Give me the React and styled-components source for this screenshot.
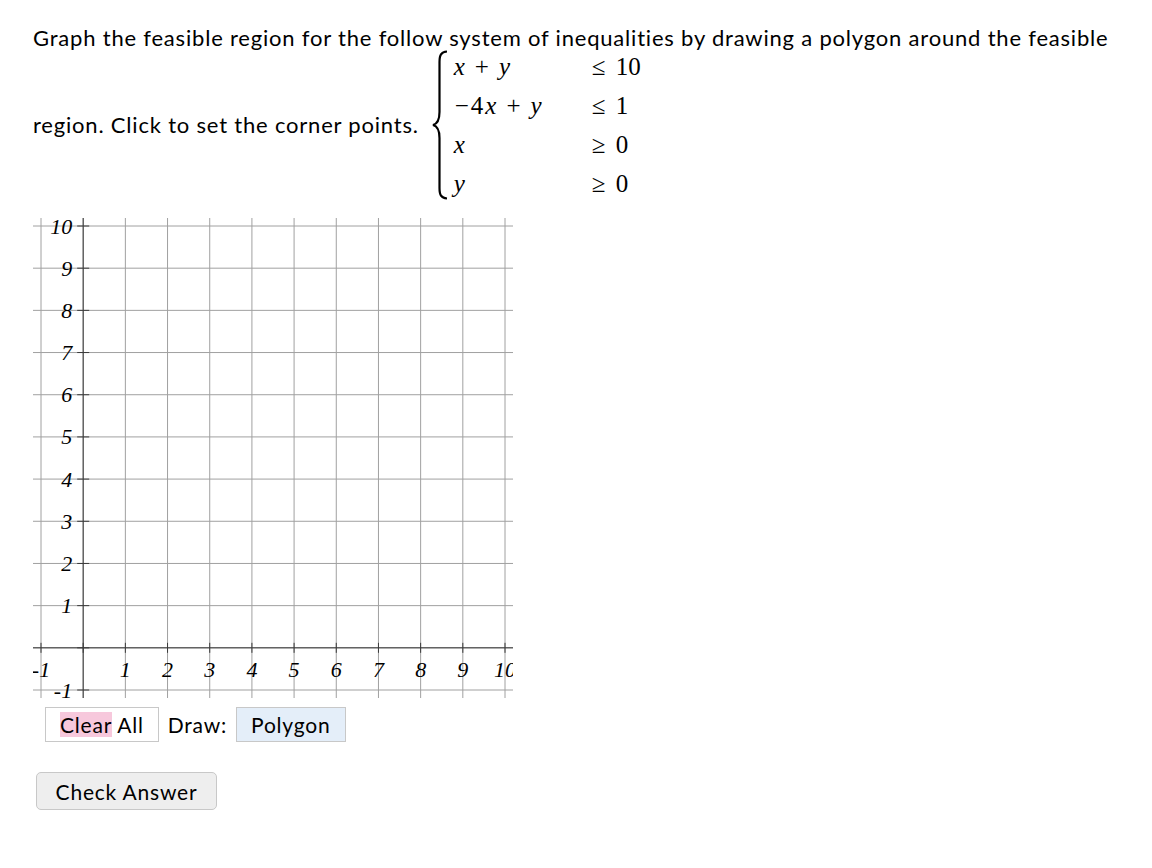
import React from 'react'
import styled, { createGlobalStyle } from 'styled-components'

const GlobalStyle = createGlobalStyle`
  body {
    margin: 0;
    background: #fff;
    color: #000;
    font-family: Lato, "Liberation Sans", sans-serif;
  }
`

const SIZE = 480
const PAD = 8
const UNIT = (SIZE - 2 * PAD) / 11
const px = (u) => PAD + (u + 1) * UNIT
const py = (u) => SIZE - PAD - (u + 1) * UNIT
const steps = Array.from({ length: 12 }, (_, i) => i - 1)

const rows = [
  { lhs: [['v', 'x'], ['op', '+'], ['v', 'y']], rel: '≤', rhs: '10' },
  { lhs: [['neg', '−'], ['n', '4'], ['v', 'x'], ['op', '+'], ['v', 'y']], rel: '≤', rhs: '1' },
  { lhs: [['v', 'x']], rel: '≥', rhs: '0' },
  { lhs: [['v', 'y']], rel: '≥', rhs: '0' },
]

const App = () => {
  return (
    <Page>
      <GlobalStyle />
      <Prompt>
        <div>Graph the feasible region for the follow system of inequalities by drawing a polygon around the feasible</div>
        <SecondLine>
          <span>region. Click to set the corner points.</span>
          <Cases>
            <Brace viewBox='0 0 16 150' width='16' height='150'>
              <path d='M15 1.5 C9 2 7.5 5 7.5 12 L7.5 62 C7.5 70 5 74 1 75 C5 76 7.5 80 7.5 88 L7.5 138 C7.5 145 9 148 15 148.5' fill='none' stroke='#000' strokeWidth='2.2' />
            </Brace>
            <CaseGrid>
              {rows.map((r, i) => (
                <React.Fragment key={i}>
                  <Cell>
                    {r.lhs.map(([kind, t], j) => (
                      <Sym key={j} $kind={kind}>{t}</Sym>
                    ))}
                  </Cell>
                  <Cell>{r.rel}</Cell>
                  <Cell>{r.rhs}</Cell>
                </React.Fragment>
              ))}
            </CaseGrid>
          </Cases>
        </SecondLine>
      </Prompt>

      <Board width={SIZE} height={SIZE} viewBox={`0 0 ${SIZE} ${SIZE}`}>
        {steps.map((u) => (
          <g key={'g' + u}>
            <GridLine x1={px(u)} y1='0' x2={px(u)} y2={SIZE} />
            <GridLine x1='0' y1={py(u)} x2={SIZE} y2={py(u)} />
          </g>
        ))}
        <AxisLine x1='0' y1={py(0)} x2={SIZE} y2={py(0)} />
        <AxisLine x1={px(0)} y1='0' x2={px(0)} y2={SIZE} />
        {steps.map((u) => (
          <g key={'t' + u}>
            <AxisLine x1={px(u)} y1={py(0) - 5} x2={px(u)} y2={py(0) + 5} />
            <AxisLine x1={px(0) - 6} y1={py(u)} x2={px(0) + 6} y2={py(u)} />
          </g>
        ))}
        {steps.filter((u) => u !== 0).map((u) => (
          <g key={'l' + u}>
            <TickLabel x={px(u)} y={py(0) + 22} textAnchor='middle' dominantBaseline='central'>{u}</TickLabel>
            <TickLabel x={px(0) - 11} y={py(u)} textAnchor='end' dominantBaseline='central'>{u}</TickLabel>
          </g>
        ))}
      </Board>

      <Controls>
        <ToolButton type='button'>
          <Mark>Clear</Mark> All
        </ToolButton>
        <span>Draw:</span>
        <ToolButton type='button' $active>Polygon</ToolButton>
      </Controls>

      <CheckButton type='button'>Check Answer</CheckButton>
    </Page>
  )
}

const Page = styled.main`
  padding: 25px 0 40px 33px;
`

const Prompt = styled.div`
  font-size: 22px;
  line-height: 26px;
  letter-spacing: 0.8px;
  white-space: nowrap;
`

const SecondLine = styled.div`
  display: flex;
  align-items: center;
  margin-top: -1px;
`

const Cases = styled.div`
  display: flex;
  align-items: center;
  margin-left: 13px;
  height: 150px;
  letter-spacing: 0;
`

const Brace = styled.svg`
  display: block;
  flex: none;
`

const CaseGrid = styled.div`
  display: grid;
  grid-template-columns: 140px 24px auto;
  grid-auto-rows: 39px;
  margin-left: 4px;
  font-family: "Liberation Serif", "DejaVu Serif", serif;
  font-size: 25px;
  line-height: 39px;
`

const Cell = styled.div`
  display: flex;
  align-items: baseline;
`

const pads = { v: '0 2px', op: '0 8px', neg: '0 2px 0 3px', n: '0' }

const Sym = styled.span`
  font-style: ${(p) => (p.$kind === 'v' ? 'italic' : 'normal')};
  padding: ${(p) => pads[p.$kind]};
`

const Board = styled.svg`
  display: block;
  margin-top: 18px;
  overflow: hidden;
`

const GridLine = styled.line`
  stroke: #a0a0a0;
  stroke-width: 1;
`

const AxisLine = styled.line`
  stroke: #3a3a3a;
  stroke-width: 1;
`

const TickLabel = styled.text`
  font-family: "Liberation Serif", "DejaVu Serif", serif;
  font-style: italic;
  font-size: 22px;
  fill: #000;
`

const Controls = styled.div`
  display: flex;
  align-items: center;
  gap: 9px;
  margin: 9px 0 0 12px;
  font-size: 21px;
  letter-spacing: 0.8px;
`

const ToolButton = styled.button`
  height: 35px;
  padding: 0 14px;
  border: 1px solid #c8c8c8;
  border-radius: 0;
  background: ${(p) => (p.$active ? '#e4eef9' : '#fff')};
  color: #000;
  font-family: inherit;
  font-size: 21px;
  letter-spacing: 0.8px;
  cursor: pointer;
`

const Mark = styled.span`
  background: #f7c8dc;
`

const CheckButton = styled.button`
  display: block;
  margin: 30px 0 0 3px;
  width: 181px;
  height: 38px;
  border: 1px solid #c8c8c8;
  border-radius: 5px;
  background: #eeeeee;
  color: #000;
  font-family: Lato, "Liberation Sans", sans-serif;
  font-size: 21px;
  letter-spacing: 0.8px;
  cursor: pointer;
`

export default App
